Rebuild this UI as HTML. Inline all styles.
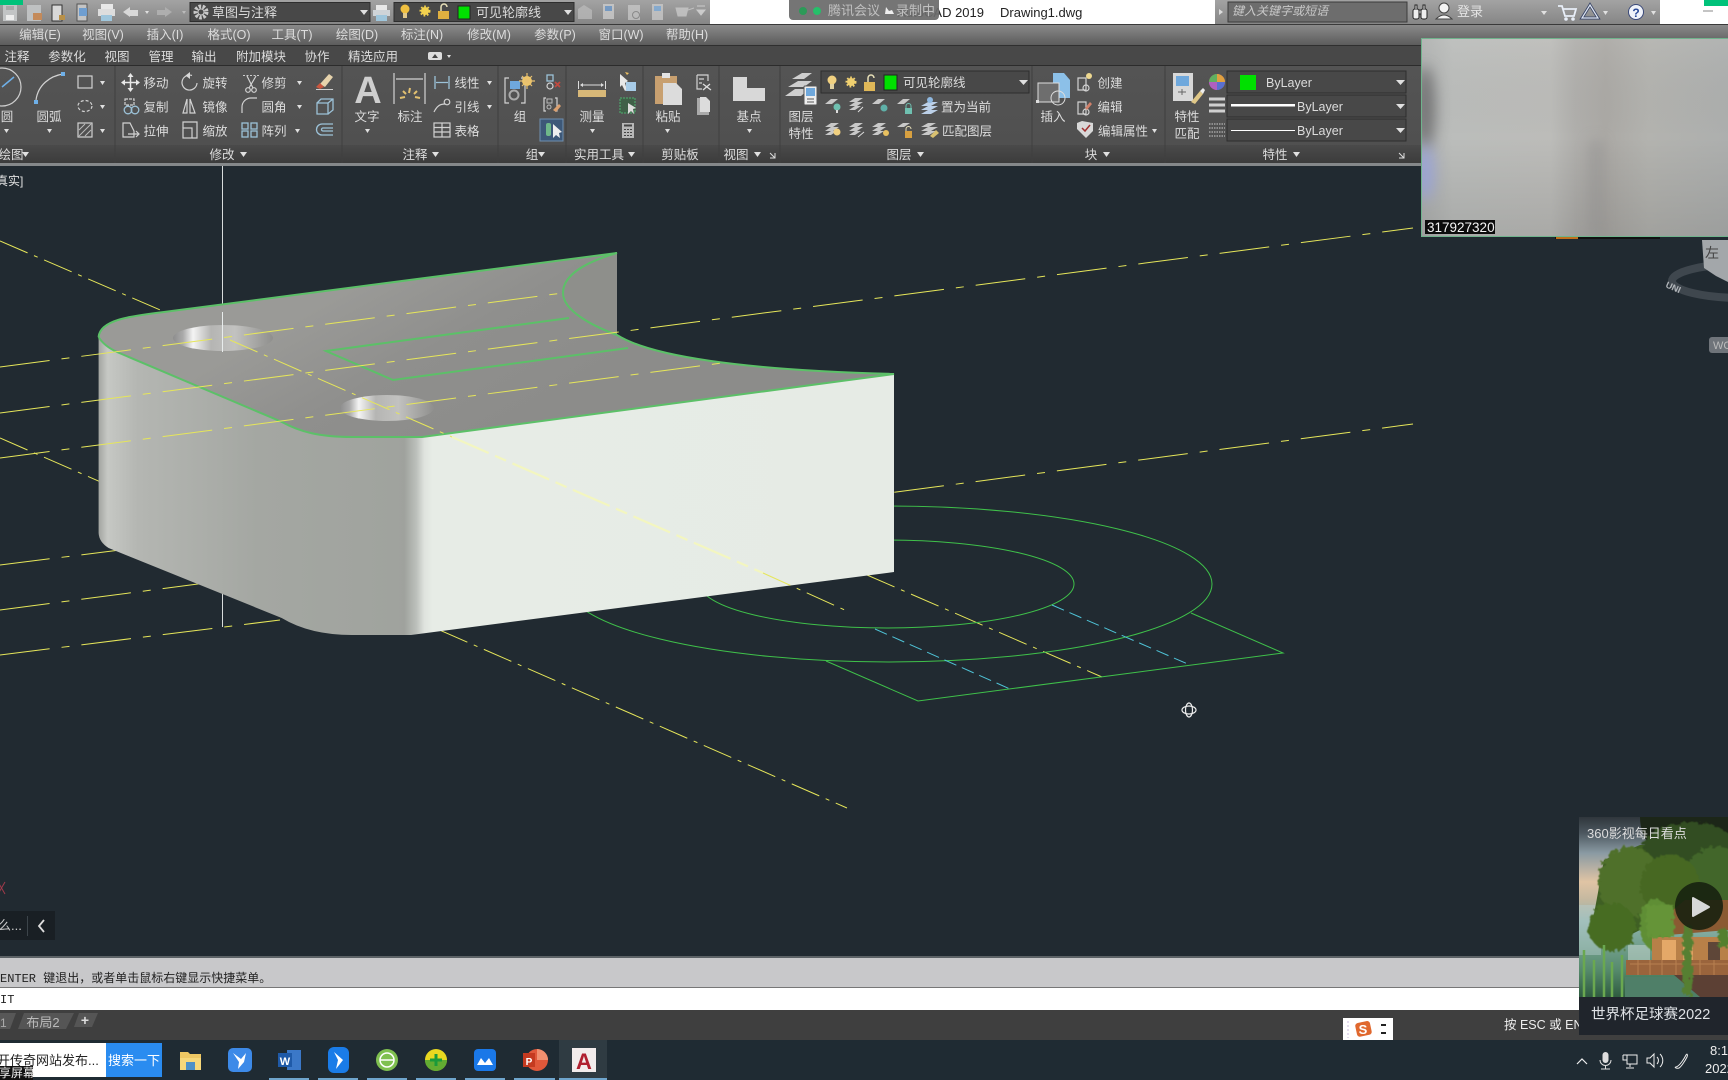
<!DOCTYPE html>
<html lang="zh"><head><meta charset="utf-8"><title>AutoCAD 2019 Drawing1.dwg</title>
<style>
html,body{margin:0;padding:0;background:#212a31;width:1728px;height:1080px;overflow:hidden}
svg{display:block;filter:blur(.35px)}
text{font-family:"Liberation Sans","Noto Sans CJK SC",sans-serif;fill:#dcdcdc;font-size:12.5px}
.i{fill:none;stroke:#d2d2d2;stroke-width:1.2}
.b{fill:none;stroke:#9cc2d8;stroke-width:1.3}
.y{fill:none;stroke:#e6e65a;stroke-width:1;stroke-dasharray:50 12 8 12}
.yd{fill:none;stroke:#e6e65a;stroke-width:1;stroke-dasharray:30 7 4 7}
.g{fill:none;stroke:#3fc04a;stroke-width:1}
.c{fill:none;stroke:#4fc4d8;stroke-width:1;stroke-dasharray:13 6}
.t{fill:none;stroke:#5cc068;stroke-width:2}
.d{fill:#484848;stroke:#2e2e2e}
.a{fill:#e0e0e0}
</style></head><body>
<svg width="1728" height="1080" viewBox="0 0 1728 1080" xmlns="http://www.w3.org/2000/svg">
<defs>
<linearGradient id="qa" x1="0" y1="0" x2="0" y2="1"><stop offset="0" stop-color="#a3a3a3"/><stop offset="1" stop-color="#868686"/></linearGradient>
<linearGradient id="mb" x1="0" y1="0" x2="0" y2="1"><stop offset="0" stop-color="#8a8a8a"/><stop offset=".6" stop-color="#6e6e6e"/><stop offset="1" stop-color="#5c5c5c"/></linearGradient>
<linearGradient id="rb" x1="0" y1="0" x2="0" y2="1"><stop offset="0" stop-color="#545454"/><stop offset="1" stop-color="#505050"/></linearGradient>
<linearGradient id="st" x1="0" y1="0" x2="0" y2="1"><stop offset="0" stop-color="#4a4a4a"/><stop offset="1" stop-color="#3c3c3c"/></linearGradient>
<linearGradient id="body" gradientUnits="userSpaceOnUse" x1="98" y1="0" x2="894" y2="0">
<stop offset="0" stop-color="#a0a29e"/><stop offset=".012" stop-color="#c6c8c4"/><stop offset=".05" stop-color="#b4b6b2"/><stop offset=".2" stop-color="#a4a7a2"/><stop offset=".375" stop-color="#a0a39e"/><stop offset=".385" stop-color="#9fa29d"/><stop offset=".4" stop-color="#bcc0bb"/><stop offset=".41" stop-color="#dfe3de"/><stop offset=".42" stop-color="#e7ece6"/><stop offset="1" stop-color="#e6ebe5"/></linearGradient>
<linearGradient id="top" gradientUnits="userSpaceOnUse" x1="400" y1="260" x2="500" y2="440"><stop offset="0" stop-color="#9a9a97"/><stop offset=".45" stop-color="#8f8f8d"/><stop offset="1" stop-color="#8c8c8a"/></linearGradient>
<linearGradient id="hole"><stop offset="0" stop-color="#8d8d8d"/><stop offset=".1" stop-color="#aaa"/><stop offset=".2" stop-color="#f4f4f4"/><stop offset=".38" stop-color="#b5b5b3"/><stop offset=".62" stop-color="#c2c2c0"/><stop offset="1" stop-color="#8f8f8d"/></linearGradient>
<linearGradient id="cam"><stop offset="0" stop-color="#afb1b0"/><stop offset=".1" stop-color="#bbbdbb"/><stop offset=".42" stop-color="#bcbcb9"/><stop offset=".5" stop-color="#b0afac"/><stop offset=".6" stop-color="#aba9a5"/><stop offset=".74" stop-color="#b3b3af"/><stop offset="1" stop-color="#adafae"/></linearGradient>
<linearGradient id="camv" x1="0" y1="0" x2="0" y2="1"><stop offset="0" stop-color="#fff" stop-opacity=".06"/><stop offset=".5" stop-color="#000" stop-opacity="0"/><stop offset="1" stop-color="#000" stop-opacity=".1"/></linearGradient>
<linearGradient id="sky" x1="0" y1="0" x2="0" y2="1"><stop offset="0" stop-color="#2f363c"/><stop offset=".09" stop-color="#4d5860"/><stop offset=".2" stop-color="#8a9aa3"/><stop offset=".36" stop-color="#e0c4a4"/><stop offset=".46" stop-color="#c4b8a0"/><stop offset=".58" stop-color="#8fb4ae"/><stop offset=".85" stop-color="#568a6c"/><stop offset="1" stop-color="#2f5c40"/></linearGradient>
<filter id="b2" x="-150%" y="-50%" width="400%" height="200%"><feGaussianBlur stdDeviation="7"/></filter>
<filter id="leaf" x="-10%" y="-10%" width="120%" height="120%"><feTurbulence type="fractalNoise" baseFrequency=".22" numOctaves="2" seed="4"/><feDisplacementMap in="SourceGraphic" scale="9"/><feGaussianBlur stdDeviation=".5"/></filter>
<clipPath id="camc"><rect x="1422" y="39" width="306" height="197"/></clipPath>
<clipPath id="vidc"><rect x="1579" y="817" width="149" height="180"/></clipPath>
</defs>

<rect width="1728" height="1080" fill="#212a31"/>

<!-- lines behind block -->
<path class="y" d="M0,610 L1413,424"/>
<path class="y" d="M0,565 L120,550"/>
<path class="y" d="M0,655 L280,620"/>
<path class="yd" d="M0,438 L847,808"/>
<path class="yd" d="M0,241 L230,340"/>
<path class="yd" d="M867,575 L1102,677"/>
<path d="M222.5,166V360M222.5,580V627" stroke="#d8dcdc" stroke-width="1" fill="none"/>

<!-- wire geometry -->
<ellipse class="g" cx="889" cy="584" rx="323" ry="78"/>
<ellipse class="g" cx="887" cy="584" rx="187" ry="44"/>
<path class="g" d="M826,661 L918,701 L1283,653 L1191,613"/>
<path class="c" d="M875,629 L1010,689"/>
<path class="c" d="M1052,605 L1190,665"/>

<!-- block -->
<path d="M98.6,337 L98.6,533 Q99,542 108.6,548 L281.7,618 Q310,635 352,635 L411,635 L894,572 L894,374 L422,437 Z" fill="url(#body)"/>
<path d="M98.6,337 C100,320 130,316 164,312 L617,253 L617,335 C650,356 740,370 894,374 L422,437 L352,437 C320,437 300,432 282,422 L117,352 Q104,346 98.6,337 Z" fill="url(#top)"/>
<ellipse cx="223" cy="338" rx="50" ry="13" fill="url(#hole)"/>
<ellipse cx="387" cy="408" rx="47" ry="13" fill="url(#hole)"/>
<path d="M617,253 C575,265 563,280 563,293 C563,310 590,325 617,335 Z" fill="#8e8f8b"/>
<path class="t" d="M98.6,337 C100,320 130,316 164,312 L617,253 C575,265 563,280 563,293 C563,310 590,325 617,335 C650,356 740,370 894,374 L422,437 L352,437 C320,437 300,432 282,422 L117,352 Q104,346 98.6,337"/>
<path class="t" d="M569,318 L326,351 L393,380 L628,348"/>
<!-- lines over block -->
<path class="y" d="M0,367 L563,293"/>
<path class="y" d="M0,413 L1413,228"/>
<path class="y" d="M0,458 L722,363"/>
<path class="yd" d="M230,340 L452,437"/>
<path d="M452,437 L763,573" stroke="#f3f6c0" stroke-width="2.2" stroke-dasharray="40 7 12 7" fill="none"/>
<path class="yd" d="M763,573 L847,611"/>
<path d="M222.5,312V352" stroke="#e8ecec" fill="none"/>

<!-- cursor -->
<g fill="none" stroke="#eee" stroke-width="1.2"><ellipse cx="1189" cy="710" rx="7" ry="4"/><ellipse cx="1189" cy="710" rx="3.5" ry="7"/></g>

<!-- viewcube -->
<ellipse cx="1742" cy="281" rx="70" ry="17" fill="none" stroke="#3f474e" stroke-width="8"/>
<path d="M1702,240 H1728 V282 L1716,276 L1704,268 Z" fill="#a3a7aa"/>
<text x="1705" y="258" style="font-size:14px;fill:#444">左</text>
<text x="1665" y="287" style="font-size:9px;font-weight:bold;fill:#b4b8bc" transform="rotate(24 1665 287)">UNI</text>
<rect x="1709" y="337" width="25" height="16" rx="3" fill="#6f747a"/><text x="1713" y="349" style="font-size:11px;fill:#bbb">WC</text>
<text x="-4" y="185" style="font-size:12px;fill:#e0e0e0">真实]</text>
<path d="M-2,882 L5,894 M5,882 L-2,894" stroke="#a03a4a" fill="none"/>

<!-- left panel -->
<rect x="0" y="911" width="55" height="29" fill="#191f24"/>
<text x="-2" y="930" style="font-size:13px;fill:#ccc">么...</text>
<path d="M27.5,916V936" stroke="#3c444a"/>
<path d="M44,920 L39,926 L44,932" fill="none" stroke="#ddd" stroke-width="1.8"/>

<!-- title bar -->
<rect x="0" y="0" width="710" height="24" fill="url(#qa)"/>
<rect x="710" y="0" width="505" height="24" fill="#fff"/>
<rect x="1215" y="0" width="445" height="24" fill="url(#qa)"/>
<rect x="1660" y="0" width="68" height="24" fill="#fff"/>
<rect x="0" y="0" width="23" height="5" fill="#00c27a"/>
<rect x="1704" y="0" width="24" height="6" fill="#00c27a"/>
<path d="M1703,11H1713" stroke="#888"/>
<!-- quick access icons -->
<g>
<rect x="3" y="5" width="14" height="16" fill="#c2c4c5"/><rect x="6" y="15" width="8" height="5" fill="#eee"/><rect x="6" y="6" width="8" height="4" fill="#a8a8a8"/>
<rect x="27" y="5" width="14" height="16" fill="#bfc1c2"/><rect x="33" y="13" width="9" height="7" fill="#c48a5a"/>
<rect x="52" y="5" width="10" height="16" fill="#d8d8d8" stroke="#333"/><rect x="59" y="15" width="6" height="5" fill="#b89048"/>
<rect x="77" y="4" width="10" height="17" fill="#c4c4c4" stroke="#555"/><rect x="79" y="8" width="8" height="8" fill="#6f9ed0"/>
<rect x="101" y="4" width="12" height="5" fill="#e8e8e8"/><rect x="98" y="9" width="17" height="7" fill="#ddd"/><rect x="101" y="15" width="11" height="6" fill="#9fc6dc"/>
<path d="M123,12 L130,7 V10 H138 V16 H130 V17 Z" fill="#d8d8d8"/><path d="M145,11l2,3 2-3z" class="a"/>
<path d="M172,12 L165,7 V10 H157 V15 H165 V17 Z" fill="#aeaeae"/><path d="M182,11l2,3 2-3z" fill="#bbb"/>
</g>
<rect class="d" x="190" y="2.500" width="180" height="19"/>
<circle cx="201" cy="12" r="5.500" fill="none" stroke="#c8c8c8" stroke-width="4" stroke-dasharray="2.500 1.400"/><circle cx="201" cy="12" r="3" fill="none" stroke="#c8c8c8"/>
<text x="212" y="17" style="font-size:13px">草图与注释</text>
<path d="M360,10h8l-4,5z" class="a"/>
<rect x="376" y="5" width="11" height="5" fill="#e8e8e8"/><rect x="373" y="10" width="17" height="6" fill="#cfd4d8"/><rect x="376" y="15" width="11" height="6" fill="#9fc6dc"/>
<rect class="d" x="394" y="2.500" width="180" height="19"/>
<circle cx="405" cy="9" r="4.500" fill="#f0c040"/><rect x="403" y="13" width="4" height="5" fill="#e2c98a"/>
<circle cx="425" cy="11" r="4" fill="#f3d24f" stroke="#f3d24f" stroke-width="3" stroke-dasharray="1.500 1.500"/>
<rect x="438" y="11" width="11" height="8" fill="#e0b040"/><path d="M441,11V7a3,3 0 0 1 6,0" fill="none" stroke="#e8e0b8" stroke-width="1.500"/>
<rect x="458" y="6" width="12" height="13" fill="#00e000" stroke="#222"/>
<text x="476" y="17" style="font-size:13px">可见轮廓线</text>
<path d="M564,10h8l-4,5z" class="a"/>
<g opacity=".75">
<path d="M578,19V9l6-4 8,5V19z" fill="#bbb"/>
<rect x="603" y="4" width="11" height="15" fill="#d0d0d0"/><rect x="605" y="6" width="7" height="5" fill="#6a9ad0"/>
<rect x="628" y="5" width="12" height="15" fill="#c9c9c9"/><circle cx="636" cy="15" r="3.500" fill="none" stroke="#888"/>
<rect x="652" y="4" width="11" height="16" fill="#ccc"/><rect x="654" y="6" width="7" height="5" fill="#7fb0e0"/>
<path d="M676,8h12l-2,8h-8zM688,10l6-2" fill="#ccc" stroke="#ccc"/>
<path d="M697,6h8M697,10h8l-4,5z" fill="#ddd" stroke="#ddd"/>
</g>
<text x="1000" y="17" style="font-size:13px;fill:#222">Drawing1.dwg</text>
<text x="984" y="17" text-anchor="end" style="font-size:13px;fill:#222">AutoCAD 2019</text>
<rect x="789" y="-4" width="150" height="24" rx="4" fill="#6b6b6b" opacity=".93"/>
<circle cx="803" cy="11" r="4" fill="#2c9a58"/><circle cx="817" cy="11" r="4" fill="#25c06a"/>
<text x="828" y="15" style="font-size:13px;fill:#c0c0c0">腾讯会议</text>
<path d="M886,7l3,4 3-1 2,4h-9z" fill="#eee"/>
<text x="896" y="15" style="font-size:13px;fill:#c0c0c0">录制中</text>
<!-- search bar -->
<path d="M1219,9l4,3-4,3z" fill="#ddd"/>
<rect x="1228" y="2" width="179" height="20" fill="#6d6d6d" stroke="#3c3c3c"/>
<text x="1232" y="15" style="font-size:12px;font-style:italic;fill:#c8c8c8">键入关键字或短语</text>
<g fill="#eee" stroke="#222" stroke-width="1"><rect x="1413" y="9" width="6" height="10" rx="2"/><rect x="1421" y="9" width="6" height="10" rx="2"/><path d="M1415,9V5h2V9M1423,9V5h2V9M1419,10h2v4h-2z"/></g>
<circle cx="1444" cy="8" r="5" fill="#f3f3f3" stroke="#444"/><path d="M1436,19q8,-8 16,0z" fill="#f3f3f3" stroke="#444"/>
<text x="1457" y="16" style="font-size:13px;fill:#e4e4e4">登录</text>
<path d="M1541,11h6l-3,4z" class="a"/>
<path d="M1558,6h4l3,10h9l2-7h-13" fill="none" stroke="#e8eef8" stroke-width="1.800"/><circle cx="1566" cy="19" r="1.800" fill="#e8eef8"/><circle cx="1573" cy="19" r="1.800" fill="#e8eef8"/>
<path d="M1590,5 L1598,18 H1582 Z" fill="none" stroke="#3a4668" stroke-width="3"/><path d="M1590,5 L1598,18 H1582 Z" fill="none" stroke="#dfe6f2" stroke-width="1.200"/>
<path d="M1603,11h5l-2.500,4z" class="a"/>
<circle cx="1636" cy="12" r="7.500" fill="#f0f3fa" stroke="#3b4a7a"/><text x="1636" y="17" text-anchor="middle" style="font-size:12px;font-weight:bold;fill:#2a4a98">?</text>
<path d="M1651,11h5l-2.500,4z" class="a"/>
<rect y="24" width="1728" height="1" fill="#3a3a3a"/>

<!-- menu -->
<rect y="25" width="1728" height="20" fill="url(#mb)"/>
<g text-anchor="middle">
<text x="40" y="39">编辑(E)</text><text x="103" y="39">视图(V)</text><text x="165" y="39">插入(I)</text><text x="229" y="39">格式(O)</text><text x="292" y="39">工具(T)</text><text x="357" y="39">绘图(D)</text><text x="422" y="39">标注(N)</text><text x="489" y="39">修改(M)</text><text x="555" y="39">参数(P)</text><text x="621" y="39">窗口(W)</text><text x="687" y="39">帮助(H)</text>
</g>
<rect y="45" width="1728" height="1" fill="#2f2f2f"/>
<!-- tabs -->
<rect y="46" width="1728" height="19" fill="#484848"/>
<g text-anchor="middle">
<text x="17" y="61">注释</text><text x="67" y="61">参数化</text><text x="117" y="61">视图</text><text x="161" y="61">管理</text><text x="204" y="61">输出</text><text x="261" y="61">附加模块</text><text x="317" y="61">协作</text><text x="373" y="61">精选应用</text>
</g>
<rect x="428" y="52" width="14" height="8" rx="2" fill="#ddd"/><path d="M432,58l3-4 3,4z" fill="#444"/><path d="M447,55h4l-2,3z" class="a"/>
<rect y="65" width="1728" height="1" fill="#2c2c2c"/>

<!-- ribbon -->
<rect y="66" width="1728" height="79" fill="url(#rb)"/>
<rect y="145" width="1728" height="18" fill="url(#st)"/>
<rect y="163" width="1728" height="3" fill="#85888a"/>
<path d="M115,66V163M342,66V163M498,66V163M566,66V163M643,66V163M719,66V163M780,66V163M1032,66V163M1165,66V163" stroke="#3f3f3f"/>

<!-- draw panel -->
<circle cx="2" cy="87" r="19" fill="none" stroke="#cfcfcf" stroke-width="1.200"/><path d="M2,87L14,77" stroke="#6fb0e8" stroke-width="1.500"/>
<text x="7" y="121" text-anchor="middle">圆</text><path d="M4,129h5l-2.500,4z" class="a"/>
<path class="i" d="M36,100C38,85 50,76 63,74"/><rect x="34" y="100" width="4" height="4" fill="#6fb0e8"/><rect x="61" y="72" width="4" height="4" fill="#6fb0e8"/>
<text x="49" y="121" text-anchor="middle">圆弧</text><path d="M47,129h5l-2.500,4z" class="a"/>
<rect class="i" x="78" y="76" width="14" height="12"/><path d="M100,81h5l-2.500,4z" class="a"/>
<ellipse class="i" cx="85" cy="106" rx="7" ry="5.500" stroke-dasharray="3 2"/><path d="M100,105h5l-2.500,4z" class="a"/>
<rect class="i" x="78" y="123" width="14" height="14"/><path d="M79,136L91,124M79,130l6-6M85,136l6-6" stroke="#bbb" fill="none"/><path d="M100,129h5l-2.500,4z" class="a"/>
<text x="11" y="159" text-anchor="middle">绘图</text><path d="M22,152h7l-3.500,5z" class="a"/>

<!-- modify -->
<path d="M130.500,75V90M123,82.500H138" stroke="#e8e8e8" stroke-width="1.500"/><path d="M130.500,73l-3,4h6zM130.500,92l-3-4h6zM121,82.500l4-3v6zM140,82.500l-4-3v6z" fill="#e8e8e8"/>
<path class="i" d="M192,75.500A7.500,7.500 0 1 0 197,83"/><path d="M190,72v7l-4.500-3.500z" fill="#d8d8d8"/>
<path d="M243,75.500h17" stroke="#ccc" stroke-dasharray="2 1.500"/><path class="i" d="M247,76l6,12M256,76l-7,12" stroke-width="1.500"/><circle cx="248" cy="90" r="2.300" class="i"/><circle cx="254" cy="90" r="2.300" class="i"/>
<path d="M320,84L329,74l4,3-8,10z" fill="#e6d3ac"/><path d="M316,87l4-4 4,4-4,2z" fill="#c9563e"/><path d="M316,89.500h17" stroke="#cfcfcf"/>
<text x="156" y="87.500" text-anchor="middle">移动</text><text x="215" y="87.500" text-anchor="middle">旋转</text><text x="274" y="87.500" text-anchor="middle">修剪</text><path d="M297,81h5l-2.500,4z" class="a"/>
<rect class="i" x="125" y="99" width="9" height="6" stroke-dasharray="3 1"/><circle cx="128" cy="110" r="3.800" class="b"/><circle cx="135" cy="110" r="3.800" class="b"/>
<path class="i" d="M187,99L183,113H187ZM190,99L195,113H190Z"/>
<path class="i" d="M242,113V107a9,9 0 0 1 9-9h6"/><path d="M297,105h5l-2.500,4z" class="a"/>
<path class="b" d="M317,103h11v11h-11zM317,103l4-4h12v11l-5,4M328,103l5-4"/>
<text x="156" y="111.500" text-anchor="middle">复制</text><text x="215" y="111.500" text-anchor="middle">镜像</text><text x="274" y="111.500" text-anchor="middle">圆角</text>
<path class="i" d="M123,123h7l4,8v6h-11zM128,134h11m-3-3l3,3-3,3"/>
<rect class="i" x="183" y="128" width="9" height="10"/><path class="i" d="M183,128V122H197V138H192"/>
<g class="b"><rect x="242" y="123" width="6" height="6"/><rect x="251" y="123" width="6" height="6"/><rect x="242" y="131" width="6" height="6"/><rect x="251" y="131" width="6" height="6"/></g>
<path d="M295,129h5l-2.500,4z" class="a"/>
<path class="b" d="M333,124h-11a5.500,5.500 0 0 0 0,11h11M333,128h-10a1.500,1.500 0 0 0 0,3h10"/>
<text x="156" y="135.500" text-anchor="middle">拉伸</text><text x="215" y="135.500" text-anchor="middle">缩放</text><text x="274" y="135.500" text-anchor="middle">阵列</text>
<text x="222" y="159" text-anchor="middle">修改</text><path d="M240,152h7l-3.500,5z" class="a"/>

<!-- annotate -->
<text x="368" y="103" text-anchor="middle" style="font-size:38px;font-weight:bold;fill:#cfcfcf">A</text>
<text x="367" y="121" text-anchor="middle">文字</text><path d="M365,129h5l-2.500,4z" class="a"/>
<path class="i" d="M394,73V104M425,73V104M396,79H423" stroke-width="1"/><path d="M410,88l-1,5M403,91l3,3M417,91l-3,3M400,98l5-1M420,98l-5-1" stroke="#e2c070" stroke-width="2"/>
<text x="410" y="121" text-anchor="middle">标注</text>
<path class="b" d="M435,76V89M449,76V89M436,82.500H448"/>
<path class="i" d="M434,112C437,106 440,104 445,104"/><circle cx="447" cy="102" r="2.800" class="i"/>
<rect class="i" x="434" y="123" width="16" height="14"/><path class="i" d="M434,127.500h16M434,132h16M442,123v14" stroke-width="1"/>
<text x="467" y="87.500" text-anchor="middle">线性</text><path d="M487,81h5l-2.500,4z" class="a"/>
<text x="467" y="111.500" text-anchor="middle">引线</text><path d="M487,105h5l-2.500,4z" class="a"/>
<text x="467" y="135.500" text-anchor="middle">表格</text>
<text x="415" y="159" text-anchor="middle">注释</text><path d="M432,152h7l-3.500,5z" class="a"/>

<!-- group -->
<path class="i" d="M509,78h-4v25h4M521,78h4v25h-4" stroke-width="1.600"/><rect x="510" y="81" width="10" height="8" fill="#6fa8dc"/><circle cx="514" cy="95" r="4.500" fill="none" stroke="#aaa" stroke-width="2"/>
<circle cx="527" cy="81" r="5" fill="#f0c868"/><path d="M527,73v16M519,81h16M522,76l10,10M532,76l-10,10" stroke="#e8c070" stroke-width="1.200"/>
<text x="520" y="121" text-anchor="middle">组</text>
<rect class="b" x="547" y="75" width="6" height="6"/><circle cx="550" cy="86" r="3" class="i"/><path d="M555,82l5,5m0-5l-5,5" stroke="#c04a40" stroke-width="1.800"/>
<path class="i" d="M546,98h-2v13h2M555,98h2v13h-2"/><rect x="547" y="99" width="5" height="4" fill="none" stroke="#bbb"/><circle cx="549" cy="107" r="2" fill="none" stroke="#bbb"/><path d="M553,110l6-6 2,2-5,6z" fill="#dba070"/>
<rect x="540" y="119" width="23" height="22" fill="#3d5878" stroke="#6f8fb0"/><rect x="546" y="123" width="5" height="13" rx="2" fill="#6fb88a"/><path d="M553,124v14l3-3 4,3-1-5 3-1z" fill="#eee"/>
<text x="532" y="159" text-anchor="middle">组</text><path d="M538,152h7l-3.500,5z" class="a"/>

<!-- utilities -->
<path d="M578.500,81v8M605.500,81v8M581,85h22" stroke="#ddd"/><path d="M580,85l3-2v4zM604,85l-3-2v4z" fill="#ddd"/><rect x="578" y="90" width="28" height="7" fill="#d8b878"/>
<text x="592" y="121" text-anchor="middle">测量</text><path d="M590,129h5l-2.500,4z" class="a"/>
<path d="M620,74l8,7-3,2 2,7-2,1-3-6-2,2z" fill="#e8e8e8"/><rect x="626" y="82" width="10" height="9" fill="#a8cce8"/><path d="M625,72l2,3 2-2z" fill="#eec060"/>
<rect x="620" y="98" width="15" height="15" fill="#3f6048" stroke="#4fb070" stroke-dasharray="2 1"/><path d="M628,103v11l3-3 3,3-1-5 3-1z" fill="#ddd"/>
<rect x="622" y="123" width="12" height="15" fill="#b8b8b8"/><path d="M624,125.500h8" stroke="#444" stroke-width="2"/><path d="M624,129.500h8M624,132.500h8M624,135.500h8" stroke="#444" stroke-dasharray="2 1"/>
<text x="599" y="159" text-anchor="middle">实用工具</text><path d="M628,152h7l-3.500,5z" class="a"/>

<!-- clipboard -->
<rect x="655" y="76" width="22" height="28" fill="#c8a070"/><rect x="662" y="73" width="8" height="5" fill="#e4e4e4"/><path d="M663,83h13l6,6v16h-19z" fill="#dcdcdc"/>
<text x="668" y="121" text-anchor="middle">粘贴</text><path d="M665,129h5l-2.500,4z" class="a"/>
<path class="i" d="M697,75h11v6M697,75v14h5M699,79h5M699,83h3"/><path d="M703,84l8,6M710,84l-7,6" stroke="#ddd" stroke-width="1.300"/>
<path d="M697,98h3v14h9v3h-12z" fill="#aaa"/><path d="M700,97h6l4,4v11h-10z" fill="#dcdcdc"/>
<text x="680" y="159" text-anchor="middle">剪贴板</text>
<!-- base -->
<path d="M733,77H747V88H765V101H733Z" fill="#d8d8d8"/>
<text x="749" y="121" text-anchor="middle">基点</text><path d="M747,129h5l-2.500,4z" class="a"/>
<text x="736" y="159" text-anchor="middle">视图</text><path d="M754,152h7l-3.500,5z" class="a"/><path d="M770,153l5,5m-5,0h5v-5" stroke="#ddd" fill="none"/>

<!-- layers -->
<path d="M792,79l10-6h10l-8,6zM788,87l10-6h14l-8,6zM785,96l10-7h14l-8,7z" fill="#cfcfcf"/>
<rect x="804" y="86" width="13" height="19" rx="1" fill="#eee" stroke="#555"/><rect x="806" y="88" width="9" height="8" fill="#6fa8dc"/><path d="M807,99h7M814,102h-7" stroke="#555"/>
<text x="801" y="121" text-anchor="middle">图层</text><text x="801" y="138" text-anchor="middle">特性</text>
<rect class="d" x="821" y="71" width="208" height="22"/>
<circle cx="832" cy="80" r="4.500" fill="#f0d080"/><rect x="830" y="84" width="4" height="5" fill="#e0d0a0"/>
<circle cx="851" cy="82" r="4" fill="#f0d070" stroke="#f0d070" stroke-width="3" stroke-dasharray="1.500 1.500"/>
<rect x="864" y="82" width="11" height="9" fill="#e0b858"/><path d="M868,82v-4a3,3 0 0 1 6,0" fill="none" stroke="#e8e0b8" stroke-width="1.500"/>
<rect x="884" y="75" width="13" height="15" fill="#00e000" stroke="#222"/>
<text x="903" y="87">可见轮廓线</text>
<path d="M1019,80h9l-4.500,5z" class="a"/>
<g fill="#c8c8c8">
<path d="M825,104l6-5h7l-6,5z"/><circle cx="837" cy="107" r="3.500" fill="#6fc0b0"/><rect x="836" y="110" width="2" height="3" fill="#ddd"/>
<path d="M849,102l6-4h8l-6,4zM849,106l6-4h8l-6,4zM849,110l6-4h6l-6,4z"/><path d="M858,112l5-5" stroke="#ddd" fill="none"/>
<path d="M872,104l6-5h7l-6,5z"/><circle cx="884" cy="108" r="3.500" fill="#5fb0a8"/>
<path d="M897,104l6-5h7l-6,5z"/><rect x="905" y="108" width="7" height="6" fill="#6fc0b0"/><path d="M906,108v-2a2.500,2.500 0 0 1 5,0v2" fill="none" stroke="#6fc0b0"/>
<path d="M921,106l7-4h10l-7,4zM921,110l7-4h10l-7,4zM921,114l7-4h10l-7,4z" fill="#bcd0e8"/><circle cx="930" cy="100" r="3" fill="#8fb8e0"/>
<path d="M825,127l6-4h8l-6,4zM825,131l6-4h8l-6,4zM825,135l6-4h6l-6,4z"/><circle cx="837" cy="132" r="3.500" fill="#f0d080"/>
<path d="M849,127l6-4h8l-6,4zM849,131l6-4h8l-6,4zM849,135l6-4h6l-6,4z"/><path d="M858,137l6-5" stroke="#ddd" fill="none"/>
<path d="M872,127l6-4h8l-6,4zM872,131l6-4h8l-6,4zM872,135l6-4h6l-6,4z"/><circle cx="886" cy="133" r="3" fill="#e8c060"/>
<path d="M897,127l6-4h7l-6,4z"/><rect x="905" y="131" width="7" height="7" fill="#d8a040"/><path d="M906,131v-2a2.500,2.500 0 0 1 5,0" fill="none" stroke="#e8e0b8"/>
<path d="M921,127l7-4h8l-7,4zM921,131l7-4h10l-7,4zM921,135l7-4h8l-7,4z"/><path d="M930,136l6-6 3,3-6,5z" fill="#d8c070"/>
</g>
<text x="966" y="111.500" text-anchor="middle">置为当前</text><text x="967" y="135.500" text-anchor="middle">匹配图层</text>
<text x="899" y="159" text-anchor="middle">图层</text><path d="M917,152h7l-3.500,5z" class="a"/>

<!-- block panel -->
<path d="M1053,73h11l6,7v18h-17z" fill="#8cc0e8"/><rect x="1038" y="83" width="21" height="19" fill="#6e6e6e" stroke="#ddd"/><circle cx="1058" cy="98" r="7" fill="none" stroke="#ddd"/><rect x="1036" y="100" width="3" height="3" fill="#ddd"/>
<text x="1053" y="121" text-anchor="middle">插入</text>
<path class="i" d="M1078,78h8v12h-8zM1080,90h5"/><circle cx="1086" cy="88" r="3" class="i"/><circle cx="1089" cy="76" r="3" fill="#eed890"/>
<text x="1110" y="87.500" text-anchor="middle">创建</text>
<path class="i" d="M1078,102h8v12h-8zM1080,114h5"/><circle cx="1086" cy="112" r="3" class="i"/><path d="M1085,108l5-6 2,2-5,6z" fill="#d0806a"/>
<text x="1110" y="111.500" text-anchor="middle">编辑</text>
<path d="M1077,123l5-2 11,2v8l-7,7-9-9z" fill="#d8d8d8"/><path d="M1082,128l3,3 5-6" stroke="#a03030" fill="none" stroke-width="1.500"/>
<text x="1123" y="135.500" text-anchor="middle">编辑属性</text><path d="M1152,129h5l-2.500,4z" class="a"/>
<text x="1091" y="159" text-anchor="middle">块</text><path d="M1103,152h7l-3.500,5z" class="a"/>

<!-- properties -->
<rect x="1173" y="73" width="20" height="28" fill="#d8d8d8"/><rect x="1176" y="76" width="13" height="10" fill="#6fa8dc"/><path d="M1178,92h8M1182,89v6" stroke="#666"/><path d="M1191,102l9-11 3,3-8,10z" fill="#e0c888"/><path d="M1200,91l3-3 2,2-2,4z" fill="#eee"/>
<text x="1187" y="121" text-anchor="middle">特性</text><text x="1187" y="138" text-anchor="middle">匹配</text>
<circle cx="1217" cy="82" r="8" fill="#c05a5a"/><path d="M1217,74a8,8 0 0 1 8,8h-8z" fill="#e0a040"/><path d="M1217,82h8a8,8 0 0 1-8,8z" fill="#5a70d0"/><path d="M1217,82v8a8,8 0 0 1-8-8z" fill="#b060c0"/><path d="M1217,82h-8a8,8 0 0 1 8-8z" fill="#60b060"/>
<path d="M1209,99h16M1209,105h16M1209,111h16" stroke="#d0d0d0" stroke-width="3"/>
<path d="M1209,124h16M1209,128h16M1209,132h16M1209,136h16" stroke="#ccc" stroke-dasharray="1.500 1"/>
<rect class="d" x="1227" y="71" width="179" height="22"/><rect class="d" x="1227" y="95" width="179" height="22"/><rect class="d" x="1227" y="119" width="179" height="22"/>
<rect x="1240" y="75" width="16" height="15" fill="#00e000"/><text x="1266" y="87">ByLayer</text>
<rect x="1231" y="104" width="64" height="2.500" fill="#fff"/><text x="1297" y="111">ByLayer</text>
<rect x="1231" y="130" width="64" height="1" fill="#fff"/><text x="1297" y="135">ByLayer</text>
<path d="M1396,80h9l-4.500,5zM1396,104h9l-4.500,5zM1396,128h9l-4.500,5z" class="a"/>
<text x="1275" y="159" text-anchor="middle">特性</text><path d="M1293,152h7l-3.500,5z" class="a"/>
<path d="M1399,153l5,5m-5,0h5v-5" stroke="#ddd" fill="none"/>

<!-- webcam -->
<rect x="1555" y="236" width="105" height="3" fill="#111"/><rect x="1556" y="236" width="22" height="3" fill="#c0701c"/>
<rect x="1421" y="38" width="307" height="199" fill="#6fb38c"/>
<g clip-path="url(#camc)">
<rect x="1422" y="39" width="306" height="197" fill="url(#cam)"/>
<rect x="1422" y="39" width="306" height="197" fill="url(#camv)"/>
<ellipse cx="1425" cy="108" rx="10" ry="42" fill="#6a6a6c" opacity=".85" filter="url(#b2)"/>
<ellipse cx="1425" cy="172" rx="9" ry="28" fill="#96a2e0" opacity=".8" filter="url(#b2)"/>
<rect x="1590" y="140" width="12" height="96" fill="#8d8c8c" opacity=".5" filter="url(#b2)"/>
</g>
<rect x="1425" y="220" width="70" height="14" fill="#0c0c0c"/>
<text x="1427" y="232" style="font-size:13.500px;fill:#f4f4f4">317927320</text>

<!-- command area -->
<rect y="956" width="1728" height="2" fill="#5c6266"/>
<rect y="958" width="1728" height="29" fill="#c8c8ca"/>
<rect y="987" width="1728" height="1" fill="#777"/>
<rect y="988" width="1728" height="22" fill="#fff"/>
<text x="0" y="982" style="font-family:'Liberation Mono','Noto Sans CJK SC',monospace;font-size:12px;fill:#222">ENTER 键退出，或者单击鼠标右键显示快捷菜单。</text>
<text x="0" y="1003" style="font-family:'Liberation Mono',monospace;font-size:12px;fill:#222">IT</text>
<!-- status -->
<rect y="1010" width="1728" height="30" fill="#3f3f3f"/>
<path d="M-4,1013H16L10,1029H-4Z" fill="#575757"/>
<text x="0" y="1027" style="font-size:12px;fill:#aaa">1</text>
<path d="M24,1013H74L66,1029H18Z" fill="#555"/>
<text x="43" y="1027" text-anchor="middle" style="font-size:13px;fill:#bbb">布局2</text>
<path d="M79,1013H98L92,1027H74Z" fill="#555"/>
<text x="85" y="1025" text-anchor="middle" style="font-size:14px;font-weight:bold;fill:#ddd">+</text>
<rect x="1343" y="1018" width="50" height="22" fill="#fff"/>
<path d="M1348,1021v17" stroke="#c9b8dd" stroke-dasharray="2 2"/>
<rect x="1356" y="1022" width="15" height="14" rx="3" fill="#e0682e" transform="rotate(-12 1363 1029)"/>
<text x="1363" y="1034" text-anchor="middle" style="font-size:13px;font-weight:bold;fill:#fff">S</text>
<path d="M1381,1025h5M1381,1033h5" stroke="#222" stroke-width="2"/>
<text x="1504" y="1029" style="font-size:12.500px;fill:#eee">按 ESC 或 ENT</text>

<!-- taskbar -->
<rect y="1040" width="1728" height="40" fill="#1f2b33"/>
<rect y="1043" width="106" height="34" fill="#fff"/>
<rect x="106" y="1043" width="56" height="34" fill="#2a8cf0"/>
<text x="-3" y="1065" style="font-size:13px;fill:#222">开传奇网站发布...</text>
<text x="134" y="1065" text-anchor="middle" style="font-size:13px;fill:#fff">搜索一下</text>
<rect y="1066" width="33" height="14" fill="#111"/>
<text x="-1" y="1077" style="font-size:12px;fill:#eee">享屏幕</text>
<rect x="559" y="1040" width="48" height="40" fill="#2f3b42"/>
<g fill="#6fa5cc"><rect x="269" y="1078" width="40" height="2"/><rect x="318" y="1078" width="40" height="2"/><rect x="367" y="1078" width="40" height="2"/><rect x="416" y="1078" width="40" height="2"/><rect x="465" y="1078" width="40" height="2"/><rect x="514" y="1078" width="41" height="2"/><rect x="559" y="1078" width="48" height="2"/></g>
<path d="M180,1052h8l2,2h11v16h-21z" fill="#eec763"/><rect x="180" y="1058" width="21" height="12" fill="#f6d77a"/><rect x="186" y="1062" width="9" height="8" fill="#4d90c8"/>
<rect x="228" y="1048" width="24" height="24" rx="5" fill="#3d8ae8"/><path d="M233,1053l8,6 5-6-2,9-6,7 1-7z" fill="#fff"/>
<rect x="287" y="1050" width="14" height="20" fill="#3b78c8"/><rect x="278" y="1053" width="14" height="14" fill="#1f5aa8"/><text x="285" y="1065" text-anchor="middle" style="font-size:11px;font-weight:bold;fill:#fff">W</text>
<rect x="328" y="1047" width="21" height="26" rx="6" fill="#1a7ce8"/><path d="M334,1052l9,8-7,9 2-9z" fill="#fff"/>
<circle cx="387" cy="1060" r="11" fill="#7fc050"/><circle cx="387" cy="1060" r="7" fill="none" stroke="#fff" stroke-width="1.500"/><path d="M380,1060h14" stroke="#fff" stroke-width="1.500"/>
<circle cx="436" cy="1060" r="11" fill="#e8d820"/><path d="M425,1060a11,11 0 0 0 22,0z" fill="#2a9a3a" opacity=".7"/><path d="M436,1054v12M430,1060h12" stroke="#1a9a3a" stroke-width="3"/>
<rect x="474" y="1049" width="22" height="22" rx="4" fill="#1a78e8"/><path d="M477,1065l4-7 4,5 4-5 4,7z" fill="#fff"/>
<circle cx="537" cy="1060" r="11" fill="#e0583a"/><path d="M537,1060V1049a11,11 0 0 1 11,11z" fill="#f09070"/><rect x="523" y="1053" width="12" height="14" fill="#c43a20"/><text x="529" y="1065" text-anchor="middle" style="font-size:10px;font-weight:bold;fill:#fff">P</text>
<rect x="572" y="1048" width="24" height="24" fill="#f2ecec"/><text x="584" y="1069" text-anchor="middle" style="font-size:22px;font-weight:bold;fill:#b02030">A</text>
<path d="M1577,1064l5-5 5,5" fill="none" stroke="#eee" stroke-width="1.200"/>
<rect x="1602.500" y="1052" width="6" height="11" rx="3" fill="#ddd"/><path d="M1600,1060a5.500,5.500 0 0 0 11,0M1605.500,1066v3M1601,1069h9" stroke="#ddd" fill="none"/>
<path d="M1623,1055h14v9h-10v-9M1623,1055v5h4M1630,1064v3M1626,1068h8" fill="none" stroke="#eee"/>
<path d="M1647,1058h3l4-4v13l-4-4h-3z" fill="none" stroke="#eee"/><path d="M1657,1057a5,5 0 0 1 0,7M1660,1054a9,9 0 0 1 0,13" fill="none" stroke="#eee"/>
<path d="M1676,1067c4,-1 9,-10 10,-12 1,-2 2,0 1,2 -2,4 -6,10 -8,11 -3,1 -5,-1 -3,-1z" fill="none" stroke="#eee"/>
<text x="1710" y="1055" style="font-size:13px;fill:#eee">8:17</text>
<text x="1705" y="1073" style="font-size:13px;fill:#eee">2022</text>

<!-- video card -->
<rect x="1579" y="997" width="149" height="38" fill="#20252c"/>
<g clip-path="url(#vidc)">
<rect x="1579" y="817" width="149" height="180" fill="url(#sky)"/>
<rect x="1579" y="905" width="22" height="50" fill="#b8cece" opacity=".45"/>
<rect x="1628" y="945" width="22" height="26" fill="#c4d6cf" opacity=".55"/>
<path d="M1640,817H1728V855H1660Q1640,840 1640,817Z" fill="#1c2618"/>
<rect x="1625" y="977" width="103" height="20" fill="#4f7f68"/>
<path d="M1604,860L1640,845H1728V925H1650L1610,945L1592,925Z" fill="#3f5f24"/>
<g filter="url(#leaf)">
<ellipse cx="1690" cy="848" rx="46" ry="26" fill="#324e20"/>
<ellipse cx="1716" cy="875" rx="30" ry="28" fill="#42662a"/>
<ellipse cx="1630" cy="882" rx="32" ry="35" fill="#4f7029"/>
<ellipse cx="1670" cy="885" rx="30" ry="30" fill="#466824"/>
<ellipse cx="1612" cy="927" rx="24" ry="24" fill="#466c24"/>
<ellipse cx="1656" cy="925" rx="16" ry="26" fill="#5f8e36"/>
</g>
<path d="M1655,925l30-25h43v30l-60,5z" fill="#8a5a32"/>
<rect x="1652" y="937" width="76" height="26" fill="#b88048"/>
<rect x="1662" y="940" width="14" height="22" fill="#e4a868"/><rect x="1683" y="940" width="10" height="22" fill="#e0a060"/><rect x="1708" y="942" width="12" height="20" fill="#5e4638"/>
<rect x="1626" y="960" width="102" height="15" fill="#9a643c"/>
<path d="M1630,964h98M1638,960v15M1650,960v15M1662,960v15M1676,960v15M1700,960v15M1714,960v15" stroke="#b88050" fill="none"/>
<path d="M1674,975H1728V997H1700Z" fill="#5c4034"/>
<g filter="url(#leaf)">
<path d="M1683,925h9v70h-9z" fill="#567f32"/>
<path d="M1646,905h28v32h-28z" fill="#659438"/>
<path d="M1718,930h10v18h-10z" fill="#52802e"/>
</g>
<path d="M1584,950v47M1594,960v37M1604,945v52M1612,962v35M1622,955v42" stroke="#6aa850" stroke-width="2.500" fill="none"/>
</g>
<text x="1587" y="838" style="font-size:13px;fill:#dcdcdc">360影视每日看点</text>
<circle cx="1699" cy="906" r="24" fill="#16200f" opacity=".88"/>
<path d="M1693,898 L1709,907 L1693,916 Z" fill="#d8d8d8" stroke="#d8d8d8" stroke-width="2" stroke-linejoin="round"/>
<text x="1591" y="1019" style="font-size:14.500px;fill:#dfe2e6">世界杯足球赛2022</text>
</svg>
</body></html>
